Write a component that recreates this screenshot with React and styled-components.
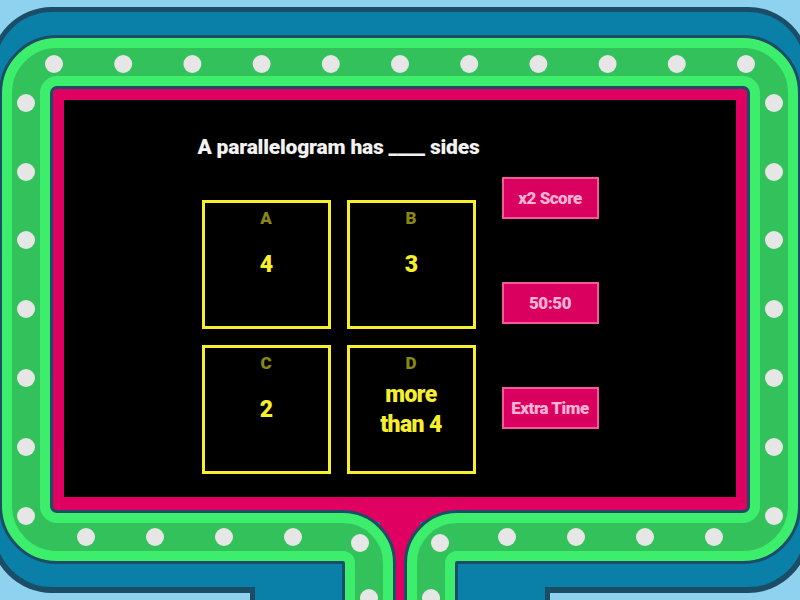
import React from "react";
import styled, { createGlobalStyle } from "styled-components";

const GlobalStyle = createGlobalStyle`
  html, body {
    margin: 0;
    padding: 0;
    background: #8ed2f0;
    overflow: hidden;
  }
`;

const answers = [
  { letter: "A", value: "4" },
  { letter: "B", value: "3" },
  { letter: "C", value: "2" },
  { letter: "D", value: "more\nthan 4" },
];

const powerUps = ["x2 Score", "50:50", "Extra Time"];

const topDots = Array.from({ length: 11 }, (_, i) => [54 + i * 69.2, 64]);
const sideYs = [103, 172, 240, 309, 378, 447, 516];
const dots = [
  ...topDots,
  ...sideYs.map((y) => [26, y]),
  ...sideYs.map((y) => [774, y]),
  ...[86, 155, 224, 293].map((x) => [x, 537]),
  ...[507, 576, 645, 714].map((x) => [x, 537]),
  [360, 543],
  [440, 543],
  [369, 598],
  [431, 598],
];

const ring =
  "M 369 620 L 369 563 A 26 26 0 0 0 343 537 L 57 537 A 31 31 0 0 1 26 506 " +
  "L 26 93 A 31 31 0 0 1 57 62 L 743 62 A 31 31 0 0 1 774 93 L 774 506 " +
  "A 31 31 0 0 1 743 537 L 457 537 A 26 26 0 0 0 431 563 L 431 620";

function Bezel() {
  return (
    <BezelSvg viewBox="0 0 800 600" width="800" height="600">
      <rect x="-10" y="7" width="820" height="586" rx="62" fill="#1c4d66" />
      <rect x="250" y="480" width="300" height="170" rx="30" fill="#1c4d66" />
      <rect x="-5" y="12" width="810" height="575" rx="57" fill="#0a7fa8" />
      <rect x="255" y="480" width="290" height="170" rx="26" fill="#0a7fa8" />
      <rect x="40" y="78" width="720" height="444" fill="#df0062" />
      <rect x="380" y="480" width="40" height="130" fill="#df0062" />
      <path d={ring} fill="none" stroke="#1c4d66" strokeWidth="54" strokeLinejoin="round" />
      <path d={ring} fill="none" stroke="#3cee6b" strokeWidth="48" strokeLinejoin="round" />
      <path d={ring} fill="none" stroke="#33c15b" strokeWidth="28" strokeLinejoin="round" />
      {dots.map(([x, y], i) => (
        <circle key={i} cx={x} cy={y} r="9" fill="#e6e6e6" />
      ))}
    </BezelSvg>
  );
}

export default function App() {
  return (
    <>
      <GlobalStyle />
      <Stage>
        <Bezel />
        <Layer>
          <Screen>
            <LeftCol>
              <Question>A parallelogram has ____ sides</Question>
              <AnswerGrid>
                {answers.map((a) => (
                  <AnswerCard key={a.letter}>
                    <Letter>{a.letter}</Letter>
                    <Value>{a.value}</Value>
                  </AnswerCard>
                ))}
              </AnswerGrid>
            </LeftCol>
            <PowerCol>
              {powerUps.map((p) => (
                <PowerButton key={p}>{p}</PowerButton>
              ))}
            </PowerCol>
          </Screen>
        </Layer>
      </Stage>
    </>
  );
}

const Stage = styled.div`
  display: grid;
  width: 800px;
  height: 600px;
  overflow: hidden;
  font-family: "Roboto", "Liberation Sans", sans-serif;
`;

const BezelSvg = styled.svg`
  grid-area: 1 / 1;
  display: block;
`;

const Layer = styled.div`
  grid-area: 1 / 1;
  padding: 100px 64px 0;
`;

const Screen = styled.div`
  background: #000;
  height: 397px;
  box-sizing: border-box;
  padding-top: 35px;
  display: flex;
  justify-content: center;
  align-items: flex-start;
  gap: 26px;
`;

const LeftCol = styled.div`
  width: 274px;
  display: flex;
  flex-direction: column;
`;

const Question = styled.div`
  margin: 0 -40px 41px;
  text-align: center;
  white-space: nowrap;
  color: #f2f2f2;
  font-weight: 900;
  font-size: 21px;
  line-height: 24px;
  letter-spacing: -0.2px;
`;

const AnswerGrid = styled.div`
  display: grid;
  grid-template-columns: repeat(2, 129px);
  grid-auto-rows: 129px;
  gap: 16px;
`;

const AnswerCard = styled.div`
  display: grid;
  border: 3px solid #f7ee2e;
  box-sizing: border-box;
  text-align: center;
`;

const Letter = styled.div`
  grid-area: 1 / 1;
  align-self: start;
  margin-top: 4px;
  color: #8a8712;
  font-weight: 900;
  font-size: 17px;
  line-height: 22px;
`;

const Value = styled.div`
  grid-area: 1 / 1;
  align-self: center;
  white-space: pre-line;
  color: #f7ee2e;
  font-weight: 900;
  font-size: 23px;
  line-height: 30px;
  letter-spacing: -0.6px;
`;

const PowerCol = styled.div`
  display: flex;
  flex-direction: column;
  gap: 63px;
  margin-top: 42px;
`;

const PowerButton = styled.div`
  width: 97px;
  height: 42px;
  box-sizing: border-box;
  display: flex;
  align-items: center;
  justify-content: center;
  background: #d9005f;
  border: 2px solid #f25a9c;
  color: #ffb3d3;
  font-weight: 900;
  font-size: 17px;
  letter-spacing: -0.5px;
`;
